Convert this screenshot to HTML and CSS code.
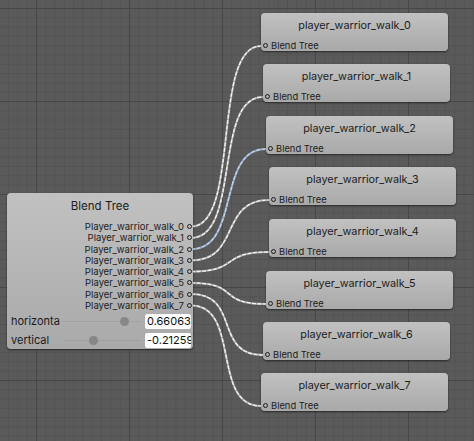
FILE: index.html
```html
<!DOCTYPE html>
<html>
<head>
<meta charset="utf-8">
<link rel="stylesheet" href="styles.css">
</head>
<body>
<div class="canvas">
  <svg class="edges" width="474" height="441" viewBox="0 0 474 441">
    <defs>
      <path id="e0" d="M191 226.6 C241 226.6 211 46 261 46"/>
      <path id="e1" d="M191 237.9 C241 237.9 213 97 263 97"/>
      <path id="e2" d="M191 249.1 C241 249.1 216 149 266 149"/>
      <path id="e3" d="M191 260.4 C241 260.4 219 200 269 200"/>
      <path id="e4" d="M191 271.6 C241 271.6 219 252 269 252"/>
      <path id="e5" d="M191 282.9 C241 282.9 216 304 266 304"/>
      <path id="e6" d="M191 294.1 C241 294.1 213 355 263 355"/>
      <path id="e7" d="M191 305.4 C241 305.4 211 406 261 406"/>
    </defs>
    <g class="edge-base">
      <use href="#e0"/><use href="#e1"/><use class="sel" href="#e2"/><use href="#e3"/>
      <use href="#e4"/><use href="#e5"/><use href="#e6"/><use href="#e7"/>
    </g>
    <g class="edge-top">
      <use href="#e0"/><use href="#e1"/><use class="sel" href="#e2"/><use href="#e3"/>
      <use href="#e4"/><use href="#e5"/><use href="#e6"/><use href="#e7"/>
    </g>
  </svg>

  <div class="node tree">
    <div class="tree-title">Blend Tree</div>
    <ul class="outputs">
      <li>Player_warrior_walk_0<span class="port"></span></li>
      <li>Player_warrior_walk_1<span class="port"></span></li>
      <li>Player_warrior_walk_2<span class="port"></span></li>
      <li>Player_warrior_walk_3<span class="port"></span></li>
      <li>Player_warrior_walk_4<span class="port"></span></li>
      <li>Player_warrior_walk_5<span class="port"></span></li>
      <li>Player_warrior_walk_6<span class="port"></span></li>
      <li>Player_warrior_walk_7<span class="port"></span></li>
    </ul>
    <div class="param">
      <span class="param-label">horizonta</span>
      <div class="slider"><span class="thumb" style="left: 57px"></span></div>
      <div class="field">0.66063</div>
    </div>
    <div class="param last">
      <span class="param-label">vertical</span>
      <div class="slider"><span class="thumb" style="left: 26px"></span></div>
      <div class="field">-0.21259</div>
    </div>
  </div>

  <div class="node clip" style="left:261px; top:13px">
    <div class="clip-title">player_warrior_walk_0</div>
    <div class="clip-in"><span class="port"></span>Blend Tree</div>
  </div>
  <div class="node clip" style="left:263px; top:64px">
    <div class="clip-title">player_warrior_walk_1</div>
    <div class="clip-in"><span class="port"></span>Blend Tree</div>
  </div>
  <div class="node clip" style="left:266px; top:116px">
    <div class="clip-title">player_warrior_walk_2</div>
    <div class="clip-in"><span class="port"></span>Blend Tree</div>
  </div>
  <div class="node clip" style="left:269px; top:167px">
    <div class="clip-title">player_warrior_walk_3</div>
    <div class="clip-in"><span class="port"></span>Blend Tree</div>
  </div>
  <div class="node clip" style="left:269px; top:219px">
    <div class="clip-title">player_warrior_walk_4</div>
    <div class="clip-in"><span class="port"></span>Blend Tree</div>
  </div>
  <div class="node clip" style="left:266px; top:271px">
    <div class="clip-title">player_warrior_walk_5</div>
    <div class="clip-in"><span class="port"></span>Blend Tree</div>
  </div>
  <div class="node clip" style="left:263px; top:322px">
    <div class="clip-title">player_warrior_walk_6</div>
    <div class="clip-in"><span class="port"></span>Blend Tree</div>
  </div>
  <div class="node clip" style="left:261px; top:373px">
    <div class="clip-title">player_warrior_walk_7</div>
    <div class="clip-in"><span class="port"></span>Blend Tree</div>
  </div>
</div>
</body>
</html>
```

FILE: styles.css
```css
* { box-sizing: border-box; }
html, body { margin: 0; padding: 0; }
body {
  width: 474px;
  height: 441px;
  overflow: hidden;
  font-family: Inter, "Noto Sans", "Liberation Sans", sans-serif;
  color: #1c1c1c;
}
.canvas {
  position: relative;
  width: 474px;
  height: 441px;
  background-color: #5a5a5a;
  background-image:
    linear-gradient(to right, #474747 0, #474747 1px, transparent 1px),
    linear-gradient(to bottom, #474747 0, #474747 1px, transparent 1px),
    linear-gradient(to right, #535353 0, #535353 1px, transparent 1px),
    linear-gradient(to bottom, #535353 0, #535353 1px, transparent 1px);
  background-size: 93px 93px, 93px 93px, 9.3px 9.3px, 9.3px 9.3px;
  background-position: 36px 8px, 36px 8px, 36px 8px, 36px 8px;
  overflow: hidden;
}
.edges {
  position: absolute;
  left: 0;
  top: 0;
}
.edges use { fill: none; }
.edge-base use {
  stroke: #a9a9a9;
  stroke-width: 2;
}
.edge-top use {
  stroke: #f4f4f4;
  stroke-width: 1.3;
  stroke-dasharray: 4 1.5;
}
.edge-base use.sel { stroke: #8aa3bd; }
.edge-top use.sel { stroke: #c4d6ea; }

.node {
  position: absolute;
  background: linear-gradient(#c1c1c1, #a9a9a9);
  border-radius: 4px;
  box-shadow: 0 1px 2px rgba(0, 0, 0, 0.55);
}
.port {
  display: inline-block;
  width: 5px;
  height: 5px;
  border: 1px solid #1e1e1e;
  border-radius: 50%;
  flex: none;
}

/* Blend tree node */
.tree {
  left: 7px;
  top: 193px;
  width: 186px;
  display: flex;
  flex-direction: column;
}
.tree-title {
  padding-top: 6px;
  height: 21px;
  line-height: 14px;
  font-size: 11.5px;
  text-align: center;
}
.outputs {
  list-style: none;
  margin: 7px 0 0 0;
  padding: 0 1px 0 0;
  display: flex;
  flex-direction: column;
}
.outputs li {
  height: 11.25px;
  line-height: 11.25px;
  font-size: 9.5px;
  display: flex;
  justify-content: flex-end;
  align-items: center;
  gap: 3px;
}
.param {
  height: 20px;
  display: flex;
  align-items: center;
  padding: 0 2px 0 4px;
}
.param.last { height: 18px; }
.param-label {
  width: 52px;
  font-size: 11px;
}
.slider {
  position: relative;
  flex: 1;
  height: 1px;
  background: rgba(0, 0, 0, 0.06);
  margin-right: 4px;
}
.thumb {
  position: absolute;
  top: -4px;
  width: 9px;
  height: 9px;
  border-radius: 50%;
  background: #878787;
}
.field {
  width: 46px;
  height: 15px;
  background: #fdfdfd;
  border-radius: 2px;
  font-size: 11px;
  line-height: 15px;
  padding-left: 2px;
  white-space: nowrap;
  overflow: hidden;
  color: #111;
}

/* Clip nodes */
.clip {
  width: 187px;
  height: 38px;
  display: flex;
  flex-direction: column;
}
.clip-title {
  height: 27px;
  padding-top: 6px;
  line-height: 14px;
  font-size: 10.8px;
  text-align: center;
}
.clip-in {
  display: flex;
  align-items: center;
  gap: 3px;
  padding-left: 2px;
  font-size: 9.4px;
  height: 11px;
  line-height: 11px;
}
```
